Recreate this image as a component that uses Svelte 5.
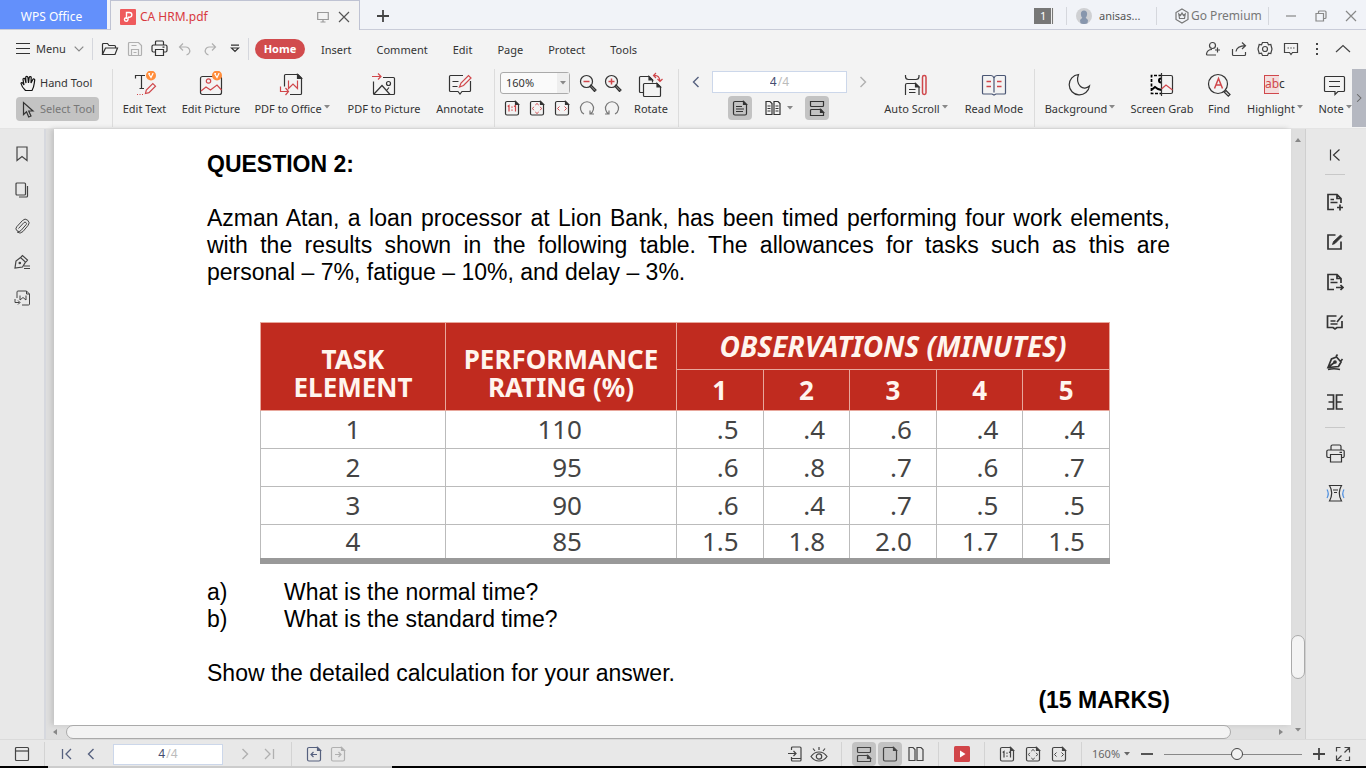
<script>
  const R = '#d0474b';
  const r = `stroke="${R}"`;
  const badge = '<circle cx="20" cy="4.500" r="5" fill="#ff8d3c" stroke="none"/><path d="M17.500 2.500l2.500 4 2-4M17.500 2.500h1.500M21.500 2.500h1" stroke="#fff"/>';
  const pageFrame = '<path d="M1.500 3a1.500 1.500 0 0 1 1.500-1.500h8.500l3 3v9a1.500 1.500 0 0 1-1.500 1.500H3a1.500 1.500 0 0 1-1.500-1.500z"/><path d="M11.500 1.500v3h3z" fill="currentColor"/>';
  const stack = '<path d="M1.500 1.500v4a1 1 0 0 0 1 1h11a1 1 0 0 0 1-1v-4zM1.500 15.500v-5a1 1 0 0 1 1-1h9.500l2.500 3v3z"/><path d="M11.500 9.500v3h3z" fill="currentColor"/>';
  const printer = '<path d="M4.500 5V2a1 1 0 0 1 1-1h6a1 1 0 0 1 1 1v3M4.500 12h-2a1.500 1.500 0 0 1-1.500-1.500V6.500A1.500 1.500 0 0 1 2.500 5h12A1.500 1.500 0 0 1 16 6.500v4a1.500 1.500 0 0 1-1.500 1.500h-2M4.500 9.500h8v6h-8zM11.500 7.200h2"/>';

  // Each entry: [width, height, inner markup]
  const icons = {
    burger: [16, 14, '<path d="M1 1.500h14M1 6.500h14M1 11.500h14"/>'],
    chevDown: [10, 6, '<path d="M.7.7L5 5 9.300.7"/>'],
    chevUp: [16, 9, '<path d="M1 8l7-6.500L15 8"/>'],
    open: [18, 14, '<path d="M1.500 12.500v-10a1 1 0 0 1 1-1h4l1.500 2h5.500a1 1 0 0 1 1 1v1.500M1.500 12.500h12.500L16.500 6H4.500z"/>'],
    save: [16, 16, '<path d="M1.500 2.500a1 1 0 0 1 1-1h9l3 3v9a1 1 0 0 1-1 1h-11a1 1 0 0 1-1-1zM4.500 14.500v-6h7v6M4.500 4.500h5M6.500 11.500h3"/>'],
    print: [17, 17, printer],
    undo: [14, 14, '<path d="M5 1.500l-3.500 3.500 3.500 3.500M1.500 5H8a4 4 0 0 1 3.500 5.500c-.5 1-1.500 2-3 2.500"/>'],
    redo: [14, 14, '<path d="M9 1.500l3.500 3.500-3.500 3.500M12.500 5H6a4 4 0 0 0-3.500 5.500c.5 1 1.500 2 3 2.500"/>'],
    more: [10, 9, '<path d="M1 1.200h8M1.500 4l3.500 3.500L8.500 4z"/>'],
    pdf: [16, 16, '<rect width="16" height="16" rx="1" fill="#ef5a5c" stroke="none"/><path d="M6.500 10V3.500h3a2.300 2.300 0 0 1 0 4.700H8M8 8.200v2.500a1.800 1.800 0 1 1-2-2" stroke="#fff" stroke-width="1.400"/>'],
    monitor: [12, 12, '<path d="M.7 1.500h10.600v7H.7zM6 8.500v2.500M3.500 11h5"/>'],
    close: [12, 12, '<path d="M1 1l10 10M11 1L1 11"/>'],
    plus: [14, 14, '<path d="M7 1v12M1 7h12" stroke-width="1.800"/>'],
    minus: [12, 12, '<path d="M1 6h10"/>'],
    minusBold: [14, 14, '<path d="M1 7h12" stroke-width="1.800"/>'],
    restore: [12, 12, '<path d="M1 3.500h7.500V11H1zM3.500 3.500V2a1 1 0 0 1 1-1H10a1 1 0 0 1 1 1v5.500a1 1 0 0 1-1 1H8.500"/>'],
    avatar: [16, 16, '<circle cx="8" cy="8" r="8" fill="#cfd0d3" stroke="none"/><path d="M8 2.500c2.500 0 3.500 2 3 4.500-.3 1.500-.8 2.300-1.300 2.800L12 12l-.5 3.200a8 8 0 0 1-7 0L4 12l2.300-2.200C5.700 9.300 5.200 8.500 5 7c-.5-2.500.5-4.500 3-4.500z" fill="#8796ad" stroke="none"/>'],
    premium: [16, 16, '<path d="M8 1l6 3.500v7L8 15l-6-3.500v-7z"/><path d="M4.800 6l1.700 1.500L8 5l1.500 2.500L11.200 6l-.7 4.500h-5z"/>'],
    addUser: [16, 16, '<circle cx="7.500" cy="4.500" r="3"/><path d="M11 14H2.500a1 1 0 0 1-1-1.200C2 10 4.500 8.500 7 8.500M12.500 6.500v5M10 9h5"/>'],
    share: [16, 16, '<path d="M1.500 8v5.500a1 1 0 0 0 1 1h11a1 1 0 0 0 1-1V11M5 10.500C5.500 7 8 5 14.500 4.700M11 1.500l3.500 3.200L11 8"/>'],
    gear: [16, 16, '<path d="M5.500 1.500h5l1 2.300 2.300-.3L15 8l-1.200 4.500-2.300-.3-1 2.300h-5l-1-2.300-2.300.3L1 8l1.200-4.500 2.300.3z"/><circle cx="8" cy="8" r="2.500"/>'],
    chat: [16, 14, '<path d="M1.500 1.500h13v9h-5L8 12.500l-1.500-2h-5z"/><path d="M4.500 6h7" stroke-dasharray="1.400 1.400"/>'],
    dots: [4, 14, '<path d="M2 1v2M2 6v2M2 11v2" stroke-width="2"/>'],
    hand: [17, 17, '<path d="M5.500 15.500C3 13 1.500 11 1 8.500c0-1 1.300-1.300 2 0l1 1.500L3 4.500c0-1.500 1.700-1.700 2-.3L6 8 5.700 2.500c0-1.500 2-1.600 2.200 0L8.500 8l.7-5.500c.3-1.300 2.200-1.200 2 .3L11 8l1.800-3.500c.7-1.200 2.200-.5 1.900.7C14 9 14.500 11 12 15.500z" stroke="#111"/>'],
    cursor: [14, 17, '<path d="M1.500 1.500v12l3-2.800 2.200 5.300 2.300-1-2.300-5H11z"/>'],
    editText: [28, 28, `<path d="M4.500 7.500v-3H14M10.500 4.500v13M8.500 17.500H13"/><path ${r} d="M14.500 22.500l.8-3.500 6.500-6.500 2.700 2.700-6.500 6.500z"/><path ${r} d="M6 23.500h7" stroke-dasharray="1 1.500"/>${badge}`],
    editPicture: [28, 28, `<rect x="3.500" y="5.500" width="21" height="18" rx="2"/><circle ${r} cx="11.500" cy="10" r="2.200"/><path ${r} d="M4 20l5-4 4.500 3 6.500-5 4.500 5"/>${badge}`],
    office: [28, 28, `<path d="M6.500 15.500v-11a1 1 0 0 1 1-1H20l3.500 3.500v15.500a1 1 0 0 1-1 1H12"/><path d="M19.500 3.500v4h4z" fill="currentColor"/><path ${r} d="M10.500 9.500v8l4.500-4.500 4.500 4.500v-8M2.500 15.500v5h7.500M7.500 17l3 3.500-3 3.500"/>`],
    toPicture: [28, 28, `<path d="M13 6.500h10.500a1 1 0 0 1 1 1v15a1 1 0 0 1-1 1h-19a1 1 0 0 1-1-1V10.500M4 23l8-8.500 8 9M17 19l2-2.500"/><circle cx="18.500" cy="12.500" r="2"/><path ${r} d="M2 5.500h9M8 2.500l3 3-3 3"/>`],
    annotate: [28, 28, `<path d="M17 4.500H4.500a1 1 0 0 0-1 1v14a1 1 0 0 0 1 1H12l2 2.500 2-2.500h7.500a1 1 0 0 0 1-1V10M6.500 10.500h6M6.500 15.500h5"/><path ${r} d="M13.500 16l1.500-4 7.500-7.500 2.500 2.500-7.500 7.500z"/>`],
    zoomOut: [18, 18, `<circle cx="7.500" cy="7.500" r="6"/><path d="M12 11l5 5-1.500 1.500-4.500-5z" fill="#aaa"/><path ${r} d="M4.500 7.500h6" stroke-width="1.500"/>`],
    zoomIn: [18, 18, `<circle cx="7.500" cy="7.500" r="6"/><path d="M12 11l5 5-1.500 1.500-4.500-5z" fill="#aaa"/><path ${r} d="M4.500 7.500h6M7.500 4.500v6" stroke-width="1.500"/>`],
    actual: [16, 16, `${pageFrame}<path ${r} d="M3.700 6.500l1.300-1v6M10 6.500l1.500-1v6M8 6.500v1.300M8 9.500v1.300"/>`],
    fitPage: [16, 16, `${pageFrame}<path ${r} d="M6.300 5L8 3.500 9.700 5M6.300 12L8 13.500 9.700 12M4.800 6.800L3.500 8.500l1.300 1.700M11.200 6.800l1.300 1.700-1.300 1.700" stroke-width="1"/>`],
    fitWidth: [16, 16, `${pageFrame}<path ${r} d="M5.500 6.500L3.500 8.500l2 2M10.500 6.500l2 2-2 2" stroke-width="1"/>`],
    actualDark: [16, 16, `${pageFrame}<path d="M3.700 6.500l1.300-1v6M10 6.500l1.500-1v6M8 6.500v1.300M8 9.500v1.300"/>`],
    fitPageDark: [16, 16, `${pageFrame}<path d="M6.300 5L8 3.500 9.700 5M6.300 12L8 13.500 9.700 12M4.800 6.800L3.500 8.500l1.300 1.700M11.200 6.800l1.300 1.700-1.300 1.700" stroke-width="1"/>`],
    fitWidthDark: [16, 16, `${pageFrame}<path d="M5.500 6.500L3.500 8.500l2 2M10.500 6.500l2 2-2 2" stroke-width="1"/>`],
    turnRight: [16, 16, '<path d="M5 14A6.500 6.500 0 1 1 11 14M11 10.500V14h4"/>'],
    turnLeft: [16, 16, '<path d="M11 14A6.500 6.500 0 1 0 5 14M5 10.500V14H1"/>'],
    rotate: [28, 28, `<path d="M6.500 21.500h-3a1 1 0 0 1-1-1v-14a1 1 0 0 1 1-1H12l3.500 3.500v2.500"/><path d="M12 5.500v3.500h3.500z" fill="currentColor"/><path d="M6.500 13.500a1 1 0 0 1 1-1H20l3.500 3.500v8.500a1 1 0 0 1-1 1h-15a1 1 0 0 1-1-1z"/><path d="M20 12.500V16h3.500z" fill="currentColor"/><path ${r} d="M16.500 4.500c4-.5 6 1.500 6.500 5.500M19 2l-2.500 2.500L19 7M20.500 8L23 10.500 25.500 8"/>`],
    prev: [8, 12, '<path d="M6.500 1L1.500 6l5 5" stroke-width="1.400"/>'],
    next: [8, 12, '<path d="M1.500 1l5 5-5 5" stroke-width="1.400"/>'],
    first: [12, 12, '<path d="M1.500 1v10M10 1L5 6l5 5" stroke-width="1.300"/>'],
    last: [12, 12, '<path d="M10.500 1v10M2 1l5 5-5 5" stroke-width="1.300"/>'],
    single: [16, 16, `${pageFrame}<path d="M4 6.500h6M4 9h8M4 11.500h7"/>`],
    singleBlank: [16, 16, pageFrame],
    dual: [16, 16, '<path d="M1 1.500h4l2 2v11H1zM9 1.500h4l2 2v11H9zM2.500 6h3M2.500 8.500h3M2.500 11h3M10.500 6h3M10.500 8.500h3M10.500 11h3"/>'],
    dualBlank: [16, 16, '<path d="M1 1.500h4l2 2v11H1zM9 1.500h4l2 2v11H9z"/>'],
    stack: [16, 17, stack],
    autoScroll: [28, 28, `<path d="M3.500 4v1.500a3 3 0 0 0 3 3H14a3 3 0 0 0 3-3V4M3.500 24V14a1.500 1.500 0 0 1 1.500-1.500h8.500L17 16v8M7 18.500h6.500M7 21.500h6.500"/><path d="M13.500 12.500V16H17z" fill="currentColor"/><rect ${r} x="20.500" y="4.500" width="3.500" height="19" rx="1.700" stroke-width="1.500"/>`],
    read: [28, 28, `<path stroke="#4a5674" d="M14 7c-.5-1.500-1.500-2.500-3-2.500H3.500a1 1 0 0 0-1 1V22a1 1 0 0 0 1 1H12l2 1 2-1h8.500a1 1 0 0 0 1-1V5.500a1 1 0 0 0-1-1H17c-1.500 0-2.500 1-3 2.500zv14.500"/><path ${r} d="M6.500 10.500h4.500M6.500 15.500h4.500M17 10.500h4.500M17 15.500h4.500" stroke-width="1.500"/>`],
    moon: [28, 28, '<path d="M12.500 3.500a10.200 10.200 0 1 0 11 11.500c-2.500 2.500-6.500 3-9 .5-3.300-3.300-3.500-8-2-12z"/>'],
    grab: [28, 28, `<path d="M13.500 4.500h-10v18h10" stroke-dasharray="3 1.500" stroke-width="1.700" stroke="#000"/><path d="M4 18.500l3-2.500 3 2 3.500 1M13 7.500a2 2 0 1 0 0 4" stroke="#000" stroke-width="2"/><path d="M13.500 2v23M13.500 4.500h9.500a1.500 1.500 0 0 1 1.500 1.500v15a1.500 1.500 0 0 1-1.500 1.500h-9.500"/><path ${r} d="M13.500 18l4.500-4 6.500 5"/>`],
    find: [28, 28, `<circle cx="13" cy="13" r="9.500"/><path d="M21 19.500l4 4-1.700 1.700-4-4z" fill="#ddd"/><path ${r} d="M9.500 17.500l4-10 4 10M11 14h5" stroke-width="1.500"/>`],
    note: [28, 28, '<path d="M4.500 5.500h18a1 1 0 0 1 1 1v13a1 1 0 0 1-1 1H17l-3 3v-3H4.500a1 1 0 0 1-1-1v-13a1 1 0 0 1 1-1zM8 10.500h11M8 15.500h11"/>'],
    bookmark: [12, 16, '<path d="M1 1h10v13.500l-5-4-5 4z"/>'],
    pages: [14, 16, '<rect x="1" y="1" width="9.500" height="12" rx="1"/><path d="M4 15h7.500a1 1 0 0 0 1-1V4"/>'],
    clip: [16, 16, '<path d="M4.500 10.500l5.500-6a1.500 1.500 0 0 1 2.200 2L7 12.500a2.800 2.800 0 0 1-4.300-3.700L8.500 2.500a3.700 3.700 0 0 1 5.500 5L9 13.500a4.500 4.500 0 0 1-6 .5" stroke-width="1"/>'],
    sign: [16, 16, '<path d="M1 14L2 7l4.500-3.500 5 4.500L8.500 13zM7 3l1.500-1.500L13.500 6l-1.500 2M10 12h6M10 14.500h6"/><circle cx="5.800" cy="9" r=".7"/>'],
    toWord: [16, 16, '<path d="M3 8V2a1 1 0 0 1 1-1h8.500L15.500 4v10a1 1 0 0 1-1 1H8M12.500 1v3h3M6 5.500v4.500l3-2.500 3 2.500V5.500M1 9v3.500h4.500M4 10.500l2 2-2 2" stroke-width="1"/>'],
    collapse: [12, 14, '<path d="M1.500 1.500v11M10.500 1.500L4.500 7l6 5.500"/>'],
    pageAdd: [18, 18, '<path d="M8 16.500H2V1.500h9l4 4V10M11 1.500v4h4M4.500 6.500H8M4.500 9.500h7M14 11.500v6M11 14.500h6"/>'],
    pageEdit: [18, 18, '<path d="M9.500 2H2v14h13V8.500"/><path d="M6.500 11.500l1-3L14.500 2l1.500 1.500-7 7z" fill="currentColor" stroke-width=".8"/>'],
    pageOut: [18, 18, '<path d="M8 16.500H2V1.500h9l4 4V10M11 1.500v4h4M4.500 6.500H8M4.500 9.500h7M10 14.500h7M14.500 12l2.500 2.500-2.500 2.500"/>'],
    comment: [18, 18, '<path d="M10.500 3H1.500v11.500H7l2 1.500 2-1.500h5V8M4.500 8h5M4.500 11h7M11 9l5.500-6.500"/>'],
    pen: [18, 18, '<path d="M2 14.500L5.500 6l5-2 4.500 5-2.500 4.500zM2 14.500L9 9M10 3.500l1.500-2M14.500 8.500l2-2.500M2 16.500q6-1.500 12 0"/><circle cx="9" cy="9" r="1"/>'],
    compare: [18, 18, '<path d="M1 2h6.500v14H1M2.500 9h5M17 2h-6.500v14H17M15.500 9h-5"/>'],
    printBig: [19, 19, '<path d="M5 6V2.500A1.500 1.500 0 0 1 6.500 1h7A1.500 1.500 0 0 1 15 2.500V6M4 13.500H2A1.500 1.500 0 0 1 .8 12V7.500A1.500 1.500 0 0 1 2.300 6h14.400a1.500 1.500 0 0 1 1.500 1.500V12a1.500 1.500 0 0 1-1.500 1.500H15.500M4.500 10.500h11v7.500h-11zM13.500 8.300h2.500"/>'],
    shrink: [19, 19, '<path d="M3.500 1.500h12c-3 5-3 10 0 15.500h-12c3-5.500 3-10.500 0-15.500zM7 6h5M8 8.500h3"/><path d="M1 5.500q2.500 4 0 8.500M18 5.500q-2.500 4 0 8.500" stroke="#4d8fe0"/>'],
    panel: [16, 16, '<rect x="1.500" y="1.500" width="13" height="13" rx="1"/><path d="M1.500 5h13"/>'],
    back: [16, 16, `${pageFrame}<path d="M5 8.500h6M7.500 6L5 8.500 7.500 11"/>`],
    forward: [16, 16, `${pageFrame}<path d="M5 8.500h6M8.500 6L11 8.500 8.500 11"/>`],
    phone: [16, 16, '<path d="M4.500 4V2a1 1 0 0 1 1-1h7.500a1 1 0 0 1 1 1v12a1 1 0 0 1-1 1H5.500a1 1 0 0 1-1-1v-3M4.500 12.500H14M1 7.500h8M6.500 5l2.500 2.500L6.500 10"/>'],
    eye: [18, 17, '<path d="M1 10.500c4-6 12-6 16 0-4 6-12 6-16 0zM9 1v3M3 2.500l2 2.500M15 2.500L13 5"/><circle cx="9" cy="10.500" r="2.700"/>'],
    play: [16, 16, '<rect width="16" height="16" rx="1.500" fill="#d14549" stroke="none"/><path d="M6 4.500l5.500 3.500L6 11.500z" fill="#fff" stroke="none"/>'],
    full: [16, 16, '<path d="M1.500 5.500v-4h4M14.500 10.500v4h-4M9.500 1.500h5v5M14.500 1.500L9.500 6.500M6.500 14.500h-5v-5M1.500 14.500l5-5"/>'],
    caret: [6, 4, '<path d="M0 0h6L3 3.500z" fill="currentColor" stroke="none"/>'],
    triUp: [6, 4, '<path d="M0 4h6L3 0z" fill="currentColor" stroke="none"/>'],
    triLeft: [4, 6, '<path d="M4 0v6L0 3z" fill="currentColor" stroke="none"/>'],
    triRight: [4, 6, '<path d="M0 0v6l4-3z" fill="currentColor" stroke="none"/>']
  };

  const tabs = ['Insert', 'Comment', 'Edit', 'Page', 'Protect', 'Tools'];
  const convertTools = [
    { label: 'Edit Text', icon: 'editText', width: 59 },
    { label: 'Edit Picture', icon: 'editPicture', width: 74 },
    { label: 'PDF to Office', icon: 'office', width: 88, menu: true },
    { label: 'PDF to Picture', icon: 'toPicture', width: 96 },
    { label: 'Annotate', icon: 'annotate', width: 56 }
  ];
  const readTools = [
    { label: 'Auto Scroll', icon: 'autoScroll', width: 80, menu: true },
    { label: 'Read Mode', icon: 'read', width: 76 }
  ];
  const reviewTools = [
    { label: 'Background', icon: 'moon', width: 86, menu: true },
    { label: 'Screen Grab', icon: 'grab', width: 78 },
    { label: 'Find', icon: 'find', width: 36 },
    { label: 'Highlight', icon: 'highlight', width: 76, menu: true },
    { label: 'Note', icon: 'note', width: 44, menu: true }
  ];
  const leftTools = [['bookmark', 'Bookmarks'], ['pages', 'Thumbnails'], ['clip', 'Attachments'], ['sign', 'Signatures'], ['toWord', 'Convert to Word']];
  const rightTools = [['pageAdd', 'Insert page'], ['pageEdit', 'Edit content'], ['pageOut', 'Extract pages'], ['comment', 'Comments'], ['pen', 'Sign'], ['compare', 'Compare']];
  const rows = [
    ['1', '110', '.5', '.4', '.6', '.4', '.4'],
    ['2', '95', '.6', '.8', '.7', '.6', '.7'],
    ['3', '90', '.6', '.4', '.7', '.5', '.5'],
    ['4', '85', '1.5', '1.8', '2.0', '1.7', '1.5']
  ];
  let zoom = $state(53);
</script>

{#snippet icon(name)}
  <svg width={icons[name][0]} height={icons[name][1]} viewBox="0 0 {icons[name][0]} {icons[name][1]}" fill="none" stroke="currentColor" stroke-width="1.2" aria-hidden="true">{@html icons[name][2]}</svg>
{/snippet}

{#snippet btn(name, label, cls = '')}
  <button class="ib {cls}" aria-label={label}>{@render icon(name)}</button>
{/snippet}

{#snippet tool(t)}
  <button class="tool" style:width="{t.width}px">
    {#if t.icon === 'highlight'}
      <span class="abc"><span class="marked">ab</span>c</span>
    {:else}
      {@render icon(t.icon)}
    {/if}
    <span class="tool-label">{t.label}{#if t.menu}<span class="mini">{@render icon('caret')}</span>{/if}</span>
  </button>
{/snippet}

<div class="app">
  <header class="titlebar">
    <button class="wps">WPS Office</button>
    <div class="doc-tab">
      {@render icon('pdf')}
      <span class="doc-name">CA HRM.pdf</span>
      <span class="tab-monitor">{@render icon('monitor')}</span>
      {@render btn('close', 'Close tab')}
    </div>
    {@render btn('plus', 'New tab', 'new-tab')}
    <div class="window">
      <span class="count">1</span>
      <span class="bar b1"></span>
      <button class="user">{@render icon('avatar')}<span>anisas...</span></button>
      <span class="bar"></span>
      <button class="premium">{@render icon('premium')}<span>Go Premium</span></button>
      <span class="bar"></span>
      <div class="controls">
        {@render btn('minus', 'Minimize')}
        {@render btn('restore', 'Restore')}
        {@render btn('close', 'Close window')}
      </div>
    </div>
  </header>

  <nav class="menubar">
    <button class="menu">{@render icon('burger')}<span>Menu</span><span class="soft">{@render icon('chevDown')}</span></button>
    <span class="bar"></span>
    <div class="quick">
      {@render btn('open', 'Open')}
      {@render btn('save', 'Save', 'dim')}
      {@render btn('print', 'Print')}
      {@render btn('undo', 'Undo', 'dim')}
      {@render btn('redo', 'Redo', 'dim')}
      {@render btn('more', 'More')}
    </div>
    <span class="bar"></span>
    <button class="home">Home</button>
    <div class="tabs">
      {#each tabs as t}<button>{t}</button>{/each}
    </div>
    <div class="menu-right">
      {@render btn('addUser', 'Invite')}
      {@render btn('share', 'Share')}
      {@render btn('gear', 'Settings')}
      {@render btn('chat', 'Feedback')}
      {@render btn('dots', 'More options')}
      {@render btn('chevUp', 'Collapse ribbon')}
    </div>
  </nav>

  <div class="ribbon">
    <div class="modes">
      <button>{@render icon('hand')}<span>Hand Tool</span></button>
      <button class="on">{@render icon('cursor')}<span>Select Tool</span></button>
    </div>
    <span class="rule"></span>
    <div class="group convert">
      {#each convertTools as t}{@render tool(t)}{/each}
    </div>
    <span class="rule"></span>
    <div class="zooming">
      <div class="line">
        <div class="zoom-box">
          <select aria-label="Zoom level"><option>160%</option><option>100%</option></select>
          <span class="arrow">{@render icon('caret')}</span>
        </div>
        {@render btn('zoomOut', 'Zoom out')}
        {@render btn('zoomIn', 'Zoom in')}
      </div>
      <div class="line">
        {@render btn('actual', 'Actual size')}
        {@render btn('fitPage', 'Fit page')}
        {@render btn('fitWidth', 'Fit width')}
        {@render btn('turnRight', 'Rotate right', 'mid')}
        {@render btn('turnLeft', 'Rotate left', 'mid')}
      </div>
    </div>
    {@render tool({ label: 'Rotate', icon: 'rotate', width: 54 })}
    <span class="rule"></span>
    <div class="paging">
      <div class="line">
        {@render btn('prev', 'Previous page', 'navy')}
        <label class="page-box"><input aria-label="Page number" value="4" /><span>/4</span></label>
        {@render btn('next', 'Next page', 'dim')}
      </div>
      <div class="line views">
        {@render btn('single', 'Single page', 'on')}
        <button class="ib dual" aria-label="Two pages">{@render icon('dual')}<span class="soft">{@render icon('caret')}</span></button>
        {@render btn('stack', 'Continuous', 'on')}
      </div>
    </div>
    <div class="group">
      {#each readTools as t}{@render tool(t)}{/each}
    </div>
    <span class="rule r2"></span>
    <div class="group review">
      {#each reviewTools as t}{@render tool(t)}{/each}
    </div>
    <button class="more-tools" aria-label="More tools">{@render icon('next')}</button>
  </div>

  <main class="work">
    <aside class="left">
      {#each leftTools as [i, l]}{@render btn(i, l)}{/each}
    </aside>
    <div class="view">
      <div class="pane">
        <article class="sheet">
          <h1>QUESTION 2:</h1>
          <p class="body">Azman Atan, a loan processor at Lion Bank, has been timed performing four work elements, with the results shown in the following table. The allowances for tasks such as this are personal – 7%, fatigue – 10%, and delay – 3%.</p>
          <table>
            <colgroup><col class="c1" /><col class="c2" /><col /><col /><col /><col /><col /></colgroup>
            <thead>
              <tr class="h1"><th rowspan="2">TASK<br />ELEMENT</th><th rowspan="2">PERFORMANCE<br />RATING (%)</th><th colspan="5" class="obs">OBSERVATIONS (MINUTES)</th></tr>
              <tr class="h2">{#each [1, 2, 3, 4, 5] as n}<th>{n}</th>{/each}</tr>
            </thead>
            <tbody>
              {#each rows as row}
                <tr>{#each row as cell}<td>{cell}</td>{/each}</tr>
              {/each}
            </tbody>
          </table>
          <div class="parts">
            <span>a)</span><span>What is the normal time?</span>
            <span>b)</span><span>What is the standard time?</span>
          </div>
          <p class="show">Show the detailed calculation for your answer.</p>
          <p class="marks">(15 MARKS)</p>
        </article>
        <div class="hscroll">
          {@render icon('triLeft')}
          <span class="hthumb"></span>
          {@render icon('triRight')}
        </div>
      </div>
      <div class="vscroll">
        {@render icon('triUp')}
        <span class="vthumb"></span>
        {@render icon('caret')}
      </div>
    </div>
    <aside class="right">
      {@render btn('collapse', 'Collapse panel', 'fold')}
      <span class="dash"></span>
      <div class="strong">
        {#each rightTools as [i, l]}{@render btn(i, l)}{/each}
      </div>
      <span class="dash"></span>
      <div class="extra">
        {@render btn('printBig', 'Print')}
        {@render btn('shrink', 'Compress')}
      </div>
    </aside>
  </main>

  <footer class="status">
    {@render btn('panel', 'Navigation panel', 'panel')}
    <span class="rule"></span>
    <div class="nav">
      {@render btn('first', 'First page', 'navy')}
      {@render btn('prev', 'Previous page', 'navy')}
      <label class="page-box small"><input aria-label="Current page" value="4" /><span>/4</span></label>
      {@render btn('next', 'Next page', 'dim')}
      {@render btn('last', 'Last page', 'dim')}
    </div>
    <span class="rule"></span>
    <div class="history">
      {@render btn('back', 'Back', 'navy')}
      {@render btn('forward', 'Forward', 'dim')}
    </div>
    <div class="status-right">
      {@render btn('phone', 'Send to phone')}
      {@render btn('eye', 'Eye protection')}
      <span class="rule"></span>
      <div class="toggles">
        {@render btn('stack', 'Continuous view', 'on')}
        {@render btn('singleBlank', 'Single page view', 'on')}
        {@render btn('dualBlank', 'Two page view')}
      </div>
      <span class="rule"></span>
      <button class="ib play" aria-label="Play">{@render icon('play')}</button>
      <span class="rule"></span>
      <div class="fits">
        {@render btn('actualDark', 'Actual size view')}
        {@render btn('fitPageDark', 'Fit page view')}
        {@render btn('fitWidthDark', 'Fit width view')}
      </div>
      <span class="rule"></span>
      <button class="percent">160%{@render icon('caret')}</button>
      {@render btn('minusBold', 'Decrease zoom')}
      <input class="slider" type="range" min="0" max="100" aria-label="Zoom" bind:value={zoom} />
      {@render btn('plus', 'Increase zoom', 'plus')}
      {@render btn('full', 'Full screen')}
    </div>
  </footer>
  <div class="edge"></div>
</div>

<style>
  :global(body) { margin: 0; background: #f3f3f3; }
  .app {
    display: flex; flex-direction: column; min-height: 100vh; overflow: hidden;
    font: 11px/16px "Noto Sans", "Open Sans", sans-serif; color: #333; background: #f3f3f3;
  }
  .app * { box-sizing: border-box; }
  button { font: inherit; color: inherit; background: none; border: 0; padding: 0; margin: 0; white-space: nowrap; }
  svg { display: block; flex: none; }
  .ib { display: flex; align-items: center; justify-content: center; width: 26px; height: 26px; flex: none; }
  .dim { color: #b0b0b0; }
  .mid { color: #777; }
  .navy { color: #56617f; }
  .soft { color: #888; }
  .on { background: #c3c3c3; border-radius: 4px; }

  .titlebar { display: flex; height: 30px; background: #f1f3f8; border-bottom: 1px solid #c9ccd9; color: #555; flex: none; }
  .wps { width: 107px; height: 29px; background: #6390fb; color: #fff; font-size: 12px; padding-top: 4px; padding-right: 4px; }
  .doc-tab {
    display: flex; align-items: center; width: 250px; height: 30px; margin-left: 3px; padding: 3px 2px 0 9px;
    background: #f3f3f3; border: 1px solid #bfc3d3; border-bottom: 0; font-size: 12px; color: #d8393e;
  }
  .doc-name { margin-left: 4px; flex: 1; }
  .tab-monitor { color: #999; margin-right: 2px; }
  .doc-tab :global(.ib) { color: #555; }
  .titlebar :global(.new-tab) { width: 46px; height: 32px; color: #444; }
  .window { display: flex; align-items: center; margin-left: auto; height: 32px; }
  .count { width: 20px; height: 16px; padding-left: 6px; background: linear-gradient(90deg, #777 17px, #eee 17px 18px, #777 18px 19px, #eee 19px); color: #fff; line-height: 16px; }
  .bar { width: 1px; height: 18px; background: #d5d7dd; flex: none; }
  .b1 { margin-left: 12px; }
  .user { display: flex; align-items: center; gap: 7px; width: 89px; padding-left: 9px; }
  .premium { display: flex; align-items: center; gap: 1px; width: 111px; padding-left: 17px; font-size: 12px; color: #777; }
  .controls { display: flex; align-items: center; gap: 4px; padding-left: 9px; padding-right: 2px; color: #888; }

  .menubar { display: flex; align-items: center; height: 37px; flex: none; }
  .menu { display: flex; align-items: center; gap: 5px; width: 92px; padding-left: 15px; font-size: 12px; }
  .menu span:not(.soft) { font-size: 11px; }
  .menu .soft { margin-left: 3px; }
  .menubar .bar { height: 22px; }
  .quick { display: flex; align-items: center; padding-left: 4px; width: 155px; }
  .quick :global(.ib) { width: 25px; }
  .home { width: 50px; height: 20px; margin-left: 6px; border-radius: 10px; background: #d14b4d; color: #fff; font-weight: 700; }
  .tabs { display: flex; gap: 25px; margin-left: 16px; padding-top: 2px; }
  .menu-right { display: flex; margin-left: auto; padding-right: 10px; color: #444; }

  .ribbon { display: flex; align-items: flex-start; height: 62px; padding-top: 2px; border-bottom: 1px solid #e4e4e4; flex: none; }
  .rule { width: 1px; height: 58px; background: #dcdcdc; flex: none; }
  .modes { display: flex; flex-direction: column; gap: 2px; width: 99px; margin-right: 13px; padding: 2px 0 0 16px; flex: none; }
  .modes button { display: flex; align-items: center; gap: 3px; height: 24px; padding-left: 4px; }
  .modes .on { gap: 4px; padding-left: 6px; color: #777; }
  .modes .on :global(svg) { color: #333; }
  .group { display: flex; }
  .convert { padding: 0 6px 0 2px; }
  .tool { display: flex; flex-direction: column; align-items: center; height: 58px; padding-top: 2px; flex: none; color: #333; }
  .tool-label { display: flex; margin-top: 2px; line-height: 16px; }
  .mini { color: #888; padding: 4px 0 0 2px; }
  .abc { width: 22px; height: 20px; margin: 4px 0; font-size: 12px; line-height: 18px; display: flex; }
  .marked { border: 1px solid #d0474b; border-right: 0; color: #d0474b; background: #f3dede; width: 15px; height: 19px; line-height: 16px; }
  .zooming { width: 129px; padding: 1px 0 0 4px; flex: none; }
  .zooming .line { display: flex; align-items: center; height: 25px; }
  .zooming .line :global(.ib) { width: 25px; height: 24px; }
  .zoom-box { display: grid; grid-template-columns: 56px 14px; width: 70px; height: 22px; margin: 0 5px 0 1px; border: 1px solid #aaa; border-radius: 3px; background: #fafafa; flex: none; }
  .zoom-box select { grid-row: 1; grid-column: 1 / 3; width: 100%; height: 20px; appearance: none; border: 0; background: none; padding: 0 5px; font: inherit; color: #333; }
  .zoom-box .arrow { grid-row: 1; grid-column: 2; display: flex; align-items: center; justify-content: center; width: 12px; background: #eee; color: #888; pointer-events: none; }
  .paging { padding: 1px 0 0 7px; width: 197px; flex: none; }
  .paging .line { display: flex; align-items: center; gap: 0; }
  .paging .line:first-child :global(.ib) { width: 20px; height: 24px; }
  .page-box { display: flex; align-items: center; justify-content: center; width: 135px; height: 22px; margin: 0 6px; background: #fff; border: 1px solid #ccd7ea; color: #bbb; font-size: 12px; }
  .page-box input { width: 8px; border: 0; padding: 0; background: none; font: inherit; color: #444c70; outline: 0; }
  .views { padding-left: 42px; height: 28px; }
  .views :global(.ib) { width: 24px; height: 24px; }
  .views .dual { width: 53px; gap: 6px; }
  .r2 { margin-left: 2px; }
  .review { padding-left: 2px; flex: 1; overflow: hidden; min-width: 0; }
  .more-tools { display: flex; align-items: center; justify-content: center; width: 14px; height: 58px; background: #b5b8c1; color: #666; flex: none; }
  .more-tools :global(svg) { width: 6px; }

  .work { display: flex; flex: 1; background: #e8e8e8; color: #444; }
  .left { display: flex; flex-direction: column; align-items: center; width: 46px; padding-top: 7px; border-right: 2px solid #d6d8de; flex: none; }
  .left :global(.ib) { height: 36px; }
  .view { display: flex; flex: 1; min-width: 0; background: #dfdfdf; }
  .pane { display: flex; flex-direction: column; flex: 1; min-width: 0; }
  .sheet {
    flex: 1; min-width: 0; margin-left: 8px; padding: 22px 121px 8px 153px; background: #fff; box-shadow: -3px 0 5px #c4c4c4;
    font: 23px/27px "Liberation Sans", Arial, sans-serif; color: #000;
  }
  .sheet h1 { margin: 0 0 27px; font-size: 23px; line-height: 27px; }
  .sheet p { margin: 0; }
  .body { text-align: justify; }
  table { width: 850px; margin: 36px 0 15px 53px; border-collapse: collapse; table-layout: fixed; font: 26px/28px "Noto Sans", sans-serif; color: #444; border-bottom: 6px solid #999; }
  .c1 { width: 185px; }
  .c2 { width: 231px; }
  th { padding: 0; background: #c02b1f; color: #fff5ee; border: 1px solid #e8a79c; font-weight: 700; vertical-align: middle; }
  .h1 th { height: 47px; }
  .h1 th:not(.obs) { padding-top: 12px; }
  .obs { font-style: italic; font-size: 28px; }
  .h2 th { height: 41px; }
  td { height: 38px; padding: 0 24px 0 0; text-align: right; border: 1px solid #bbb; line-height: 37px; }
  tr:last-child td { height: 34px; line-height: 33px; }
  td:first-child { text-align: center; padding: 0; }
  td:nth-child(2) { padding-right: 94px; }
  .parts { display: grid; grid-template-columns: 77px 1fr; margin-bottom: 27px; }
  .marks { text-align: right; font-weight: 700; }
  .vscroll { display: flex; flex-direction: column; align-items: center; width: 14px; padding: 9px 0 7px; color: #888; flex: none; }
  .vthumb { width: 14px; height: 44px; margin: auto 0 49px; border: 1px solid #aaa; border-radius: 7px; background: #f3f3f3; }
  .hscroll { display: flex; align-items: center; height: 14px; padding: 0 8px 0 7px; color: #888; }
  .hthumb { flex: 1; height: 14px; margin: 0 48px 0 9px; border: 1px solid #aaa; border-radius: 7px; background: #f3f3f3; }
  .right { display: flex; flex-direction: column; align-items: center; width: 61px; padding-right: 2px; border-left: 1px solid #cfcfcf; color: #333; flex: none; }
  .right :global(.ib) { height: 40px; }
  .right :global(.fold) { height: 32px; margin-top: 10px; }
  .dash { width: 20px; height: 1px; background: #c8c8c8; margin: 3px 0 7px; }
  .strong :global(svg) { stroke-width: 1.7px; }
  .strong + .dash { margin: 5px 0; }

  .status { display: flex; align-items: center; height: 27px; background: #e8e8e8; border-top: 1px solid #dadada; color: #444; flex: none; padding-top: 2px; }
  .status .rule { height: 24px; background: #d3d3d3; }
  .status :global(.ib) { height: 24px; }
  .status :global(.panel) { width: 44px; }
  .nav { display: flex; align-items: center; width: 246px; padding-left: 10px; }
  .nav :global(.ib) { width: 24px; }
  .nav .page-box { width: 110px; height: 21px; margin: 0 10px; }
  .history { display: flex; padding-left: 10px; }
  .history :global(.ib) { width: 24px; }
  .status-right { display: flex; align-items: center; margin-left: auto; padding-right: 11px; }
  .status-right > :global(.ib) { width: 24px; }
  .status-right .rule { margin-left: 10px; }
  .toggles { display: flex; gap: 2px; padding-left: 10px; }
  .toggles :global(.ib) { width: 24px; }
  .status-right .play { width: 45px; }
  .status-right .play + .rule { margin-left: 0; }
  .fits { display: flex; padding-left: 9px; }
  .status-right .fits + .rule { margin-left: 9px; }
  .percent { display: flex; align-items: center; gap: 4px; width: 53px; padding-left: 10px; color: #666; }
  .slider { width: 138px; height: 14px; margin: 0 5px; appearance: none; background: none; }
  .slider::-webkit-slider-runnable-track { height: 1px; background: #888; }
  .slider::-webkit-slider-thumb { appearance: none; width: 12px; height: 12px; margin-top: -6px; border: 1px solid #444; border-radius: 50%; background: #f3f3f3; }
  .edge { height: 2px; flex: none; background: linear-gradient(90deg, #000 48px, #ccc 48px 392px, #000 392px); }
</style>
